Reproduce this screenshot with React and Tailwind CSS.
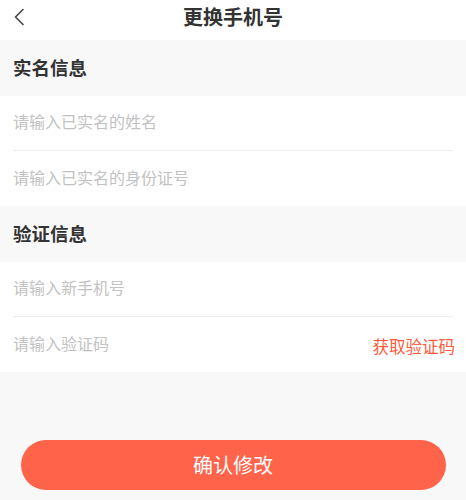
import { useState } from "react"

const font = { fontFamily: '"Noto Sans CJK SC", "Noto Sans", sans-serif' }

function SectionTitle({ children }) {
  return (
    <div className="h-[56px] bg-[#f8f8f8] flex items-center px-[13px]">
      <span className="text-[18.5px] font-bold text-[#333]">{children}</span>
    </div>
  )
}

function Field({ placeholder, divider, children }) {
  return (
    <div className="h-[55px] bg-white px-[13px]">
      <div className={"h-full flex items-center " + (divider ? "border-b border-[#eeeeee]" : "")}>
        <input
          className="flex-1 min-w-0 bg-transparent outline-none text-[16px] text-[#333] placeholder:text-[#c2c2c2] pb-[4px]"
          placeholder={placeholder}
        />
        {children}
      </div>
    </div>
  )
}

export default function App() {
  const [phone] = useState("")
  return (
    <div className="w-[466px] h-[500px] bg-[#f8f8f8] flex flex-col" style={font}>
      {/* 顶部导航 */}
      <div className="h-[40px] bg-white flex items-center relative">
        <button className="w-[38px] h-full flex items-center justify-center pb-[7px]">
          <svg width="12" height="18" viewBox="0 0 12 18" fill="none">
            <path d="M10 1.5 L2.5 9 L10 16.5" stroke="#444" strokeWidth="1.6" strokeLinecap="round" strokeLinejoin="round" />
          </svg>
        </button>
        <div className="absolute inset-x-0 top-0 h-full flex items-center justify-center pointer-events-none pb-[6px]">
          <span className="text-[20px] font-bold text-[#333]">更换手机号</span>
        </div>
      </div>

      <SectionTitle>实名信息</SectionTitle>
      <Field placeholder="请输入已实名的姓名" divider />
      <Field placeholder="请输入已实名的身份证号" />

      <SectionTitle>验证信息</SectionTitle>
      <Field placeholder="请输入新手机号" divider />
      <Field placeholder="请输入验证码">
        <span className="text-[16.5px] text-[#ff5a3c] pt-[4px] mr-[-2px]">获取验证码{phone}</span>
      </Field>

      <div className="flex-1 flex items-end justify-center pb-[10px]">
        <button className="w-[425px] h-[50px] rounded-full bg-[#ff634a] text-white text-[20px]">
          确认修改
        </button>
      </div>
    </div>
  )
}
